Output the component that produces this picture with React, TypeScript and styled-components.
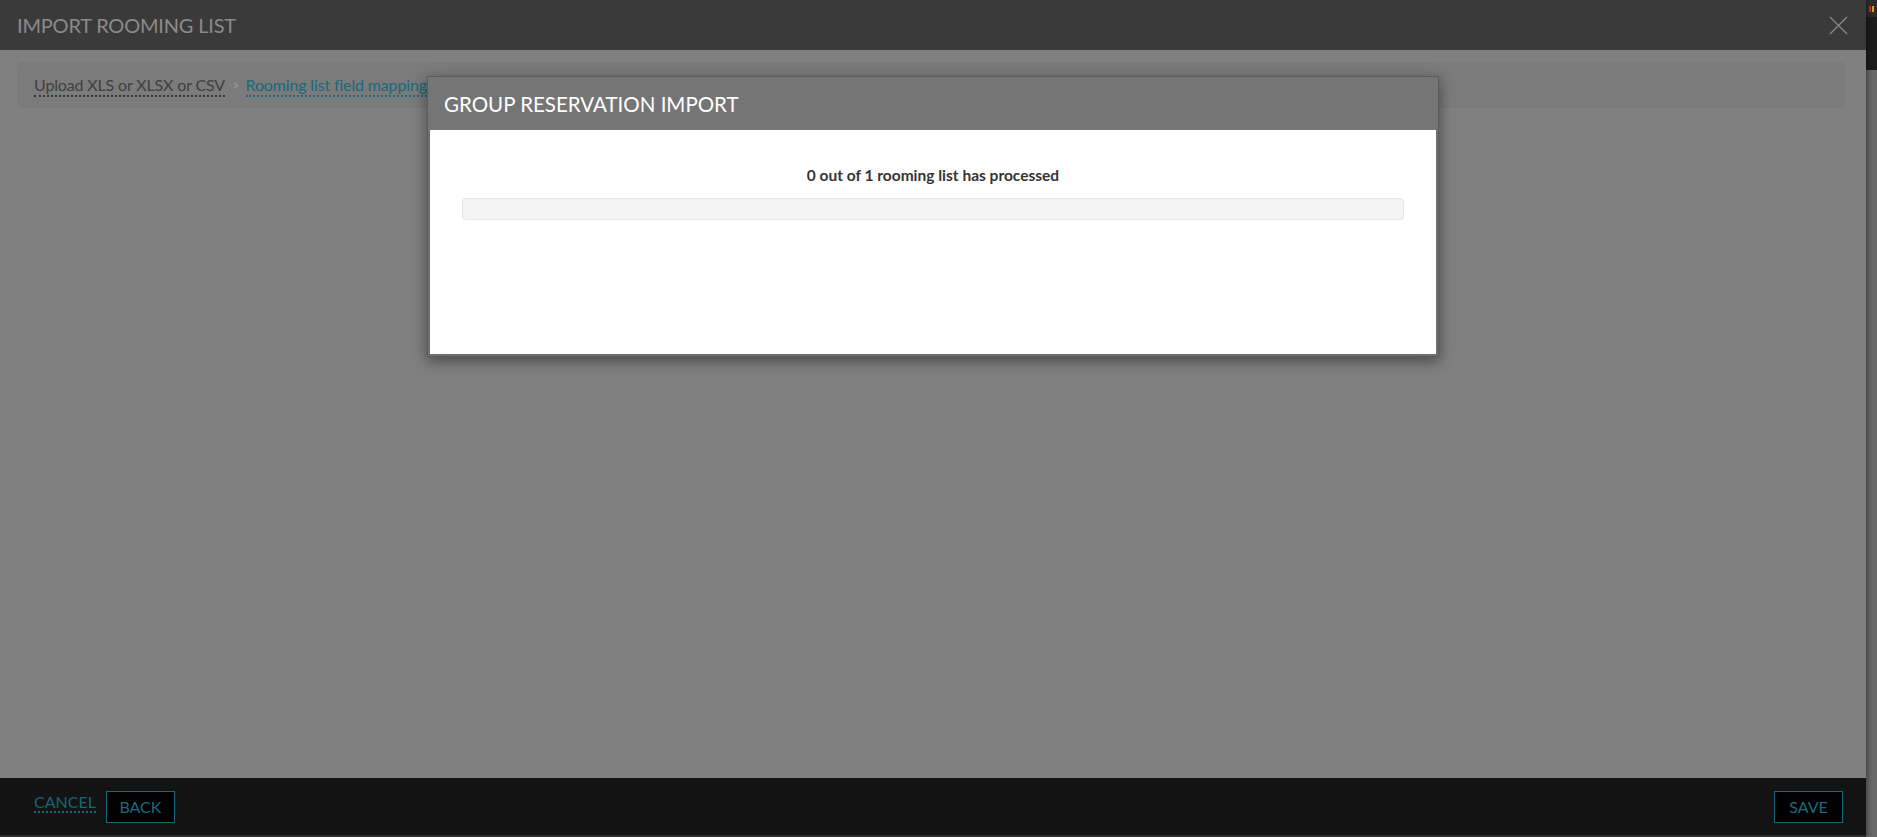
import React from 'react';
import styled, {createGlobalStyle} from 'styled-components';

const GlobalStyle = createGlobalStyle`
  html, body { margin: 0; padding: 0; background: #686868; }
  body { font-family: Lato, "Open Sans", "Liberation Sans", sans-serif; }
`;

const Page = styled.div`
  display: flex;
  width: 1877px;
  height: 837px;
  overflow: hidden;
`;

const Panel = styled.div`
  position: relative;
  width: 1866px;
  height: 837px;
  display: flex;
  flex-direction: column;
  box-shadow: 2px 0 4px rgba(0, 0, 0, 0.35);
  z-index: 1;
`;

const Header = styled.div`
  height: 50px;
  flex: none;
  background: #3a3a3a;
  display: flex;
  align-items: center;
  justify-content: space-between;
  padding: 0 18px 0 17px;
`;

const Title = styled.h1`
  margin: 0;
  font-size: 20px;
  font-weight: 400;
  color: #8b8b8b;
  text-transform: uppercase;
  letter-spacing: -0.2px;
`;

const CloseButton = styled.button`
  width: 20px;
  height: 20px;
  padding: 0;
  border: 0;
  background: transparent;
  display: flex;
  align-items: center;
  justify-content: center;
`;

const Content = styled.div`
  flex: 1;
  background: #808080;
  padding: 12px 21px 0 17px;
`;

const Breadcrumb = styled.div`
  height: 46px;
  background: #7b7b7b;
  border-radius: 5px;
  display: flex;
  align-items: center;
  padding: 0 17px;
  font-size: 16px;
`;

const Step = styled.span<{$kind: 'done' | 'link' | 'current'}>`
  color: ${p => (p.$kind === 'link' ? '#17697b' : p.$kind === 'done' ? '#404040' : '#2b2b2b')};
  border-bottom: ${p => (p.$kind === 'current' ? '0' : `2px dotted ${p.$kind === 'link' ? '#17697b' : '#353535'}`)};
  line-height: 20px;
  padding-top: 2px;
  letter-spacing: -0.15px;
`;

const Separator = styled.span`
  color: #9a9a9a;
  margin: 0 6px 0 7px;
  font-size: 13px;
`;

const Footer = styled.div`
  height: 57px;
  flex: none;
  background: #131313;
  border-bottom: 2px solid #2c2c2c;
  display: flex;
  align-items: center;
  padding: 0 23px 0 34px;
`;

const TextButton = styled.span`
  color: #1b6579;
  font-size: 16px;
  text-transform: uppercase;
  border-bottom: 2px dotted #1b6579;
  line-height: 19px;
  margin-right: 10px;
  margin-top: -8px;
`;

const OutlineButton = styled.button<{$right?: boolean}>`
  height: 32px;
  min-width: 69px;
  padding: 0 12px;
  background: #000;
  border: 1px solid #17677b;
  color: #1b6a80;
  font-family: inherit;
  font-size: 16px;
  text-transform: uppercase;
  margin-left: ${p => (p.$right ? 'auto' : '0')};
`;

const ModalLayer = styled.div`
  position: absolute;
  inset: 0;
  display: flex;
  justify-content: center;
  align-items: flex-start;
  padding-top: 76px;
  pointer-events: none;
`;

const Modal = styled.div`
  width: 1010px;
  background: #6e6e6e;
  border: 1px solid #5c5c5c;
  box-shadow: 0 4px 14px rgba(0, 0, 0, 0.45);
`;

const ModalHeader = styled.div`
  height: 53px;
  background: #757575;
  display: flex;
  align-items: center;
  padding: 0 16px;
`;

const ModalTitle = styled.h2`
  margin: 0;
  color: #fff;
  font-size: 20.5px;
  font-weight: 400;
  text-transform: uppercase;
`;

const ModalBody = styled.div`
  background: #fff;
  margin: 0 2px 2px;
  height: 224px;
  padding: 36px 32px 0 32px;
  box-sizing: border-box;
`;

const Status = styled.div`
  text-align: center;
  font-size: 15.5px;
  font-weight: 700;
  color: #353535;
  line-height: 18px;
`;

const Progress = styled.div`
  margin-top: 14px;
  height: 20px;
  background: #f3f3f3;
  border: 1px solid #e6e6e6;
  border-radius: 4px;
`;

const Side = styled.div`
  flex: 1;
  display: flex;
  flex-direction: column;
`;

const SideTop = styled.div`
  height: 17px;
  background: #2c2c2c;
  display: flex;
  align-items: center;
  padding-left: 3px;
  gap: 1px;
`;

const Mark = styled.span<{$color: string}>`
  width: 2px;
  height: 6px;
  background: ${p => p.$color};
`;

const SideBar = styled.div`
  height: 53px;
  background: #1c1c1c;
`;

const SideRest = styled.div`
  flex: 1;
  background: #686868;
`;

const CloseIcon = () => (
  <svg width="19" height="19" viewBox="0 0 19 19">
    <path d="M1 1 L18 18 M18 1 L1 18" stroke="#8a8a8a" strokeWidth="1.3" fill="none" />
  </svg>
);

const App = () => {
  return (
    <>
      <GlobalStyle />
      <Page>
        <Panel>
          <Header>
            <Title>Import rooming list</Title>
            <CloseButton aria-label="close">
              <CloseIcon />
            </CloseButton>
          </Header>
          <Content>
            <Breadcrumb>
              <Step $kind="done">Upload XLS or XLSX or CSV</Step>
              <Separator>&gt;</Separator>
              <Step $kind="link">Rooming list field mapping</Step>
              <Separator>&gt;</Separator>
              <Step $kind="current">Reviewing the imported list</Step>
            </Breadcrumb>
          </Content>
          <Footer>
            <TextButton>Cancel</TextButton>
            <OutlineButton>Back</OutlineButton>
            <OutlineButton $right>Save</OutlineButton>
          </Footer>
          <ModalLayer>
            <Modal>
              <ModalHeader>
                <ModalTitle>Group reservation import</ModalTitle>
              </ModalHeader>
              <ModalBody>
                <Status>0 out of 1 rooming list has processed</Status>
                <Progress />
              </ModalBody>
            </Modal>
          </ModalLayer>
        </Panel>
        <Side>
          <SideTop>
            <Mark $color="#c8321e" />
            <Mark $color="#d9a21a" />
          </SideTop>
          <SideBar />
          <SideRest />
        </Side>
      </Page>
    </>
  );
};

export default App;
